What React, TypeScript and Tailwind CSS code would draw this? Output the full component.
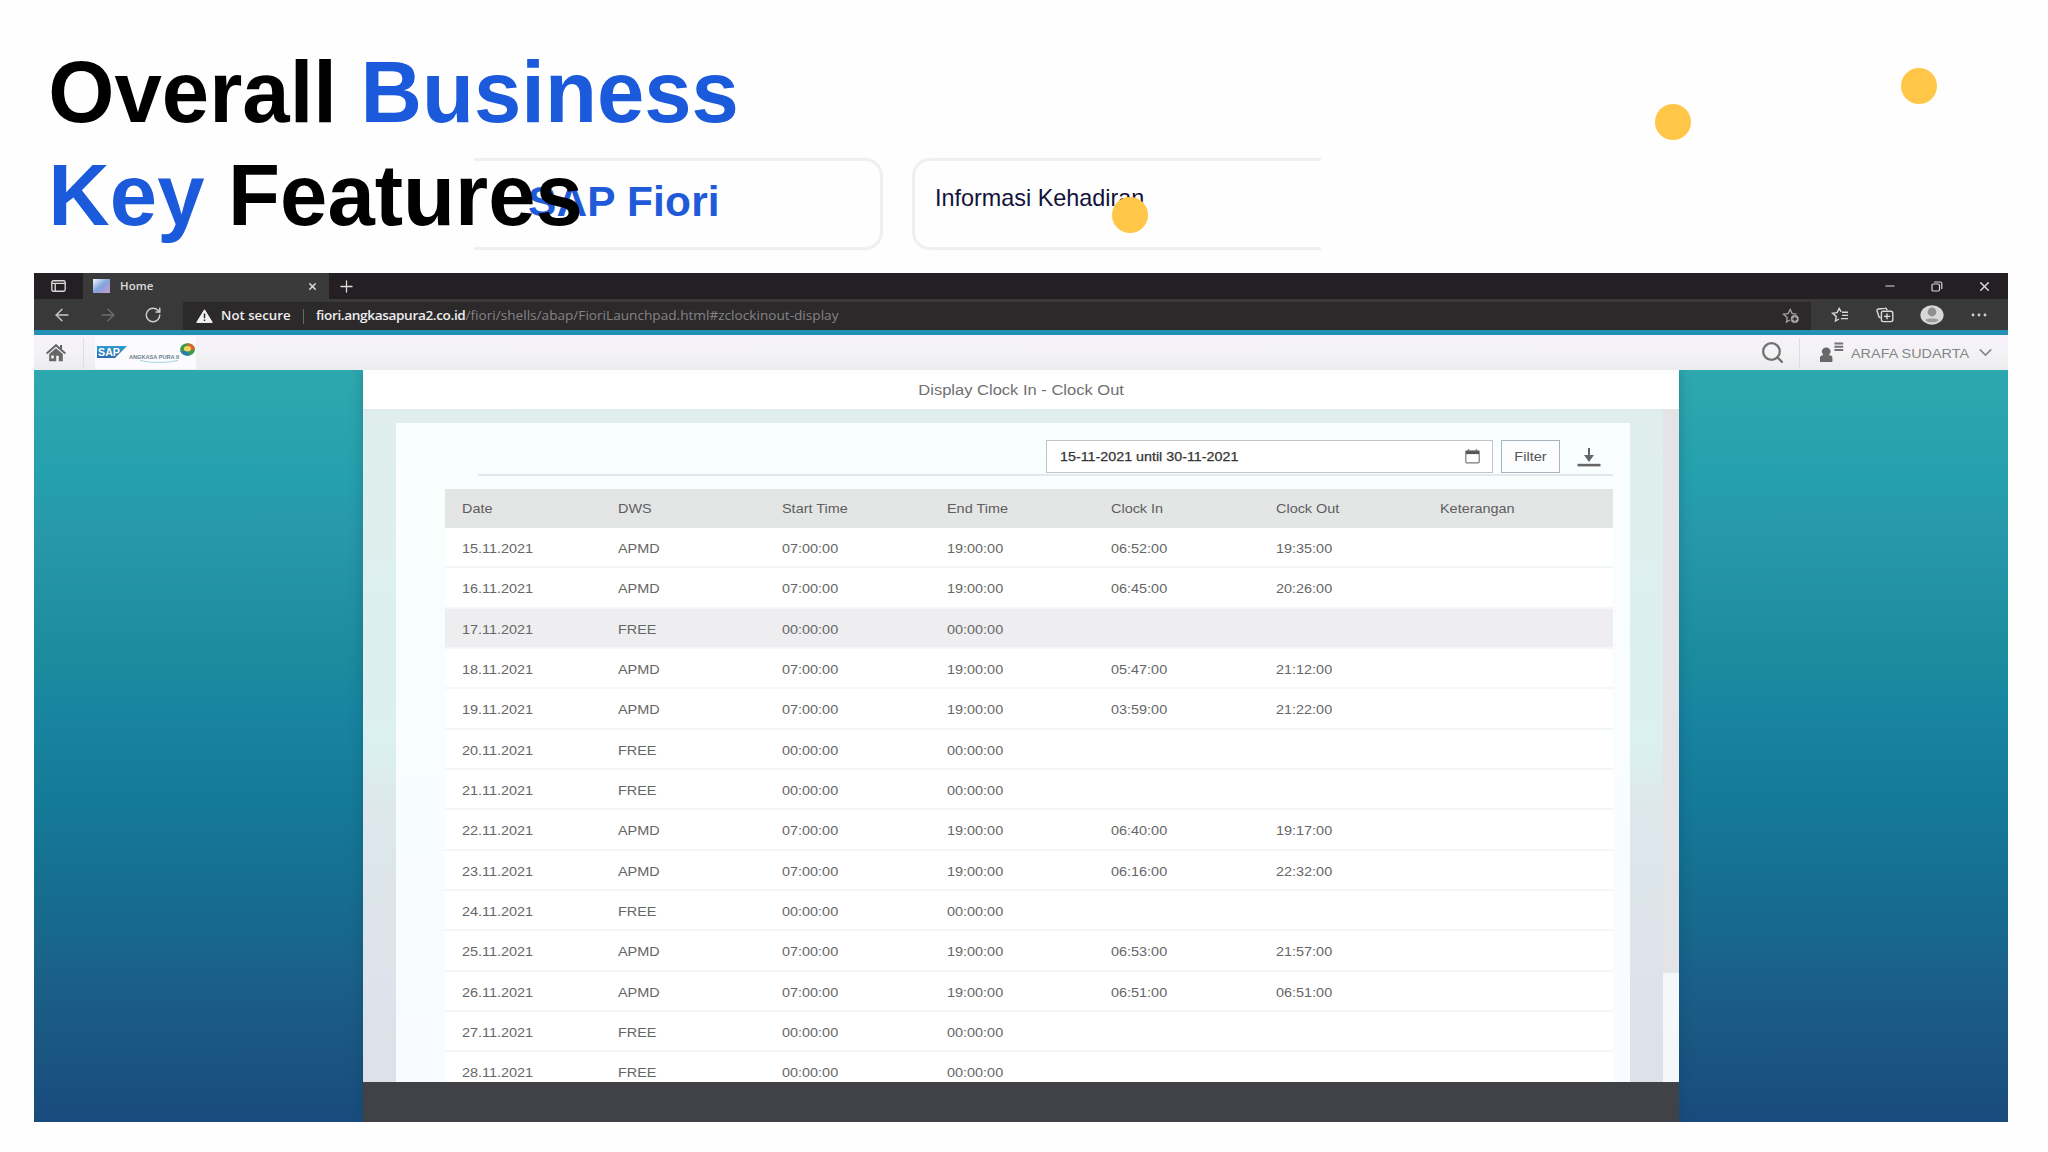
import { RotateCw, ArrowLeft, ArrowRight, X, Plus, Minus, ChevronDown, Search } from "lucide-react";

const columns = ["Date", "DWS", "Start Time", "End Time", "Clock In", "Clock Out", "Keterangan"];

const rows = [
  { date: "15.11.2021", dws: "APMD", clockIn: "06:52:00", clockOut: "19:35:00" },
  { date: "16.11.2021", dws: "APMD", clockIn: "06:45:00", clockOut: "20:26:00" },
  { date: "17.11.2021", dws: "FREE", clockIn: "", clockOut: "" },
  { date: "18.11.2021", dws: "APMD", clockIn: "05:47:00", clockOut: "21:12:00" },
  { date: "19.11.2021", dws: "APMD", clockIn: "03:59:00", clockOut: "21:22:00" },
  { date: "20.11.2021", dws: "FREE", clockIn: "", clockOut: "" },
  { date: "21.11.2021", dws: "FREE", clockIn: "", clockOut: "" },
  { date: "22.11.2021", dws: "APMD", clockIn: "06:40:00", clockOut: "19:17:00" },
  { date: "23.11.2021", dws: "APMD", clockIn: "06:16:00", clockOut: "22:32:00" },
  { date: "24.11.2021", dws: "FREE", clockIn: "", clockOut: "" },
  { date: "25.11.2021", dws: "APMD", clockIn: "06:53:00", clockOut: "21:57:00" },
  { date: "26.11.2021", dws: "APMD", clockIn: "06:51:00", clockOut: "06:51:00" },
  { date: "27.11.2021", dws: "FREE", clockIn: "", clockOut: "" },
  { date: "28.11.2021", dws: "FREE", clockIn: "", clockOut: "" },
];

const gridCols = "grid grid-cols-[156px_164px_165px_164px_165px_164px_1fr] items-center pl-[17px]";

function Cell({ children }: { children: string }) {
  return <span className="origin-left scale-x-[1.11] justify-self-start whitespace-nowrap">{children}</span>;
}

function SlideHeader() {
  return (
    <div className="grid h-[273px] shrink-0">
      <div className="col-start-1 row-start-1 flex items-start gap-[29px] pt-[158px] pl-[474px]">
        <div className="h-[92px] w-[409px] rounded-r-[18px] border-y-[3px] border-r-[3px] border-[#f0eef2] pt-[17px] pl-[54px] text-[42.4px] leading-[48px] font-bold tracking-[0.2px] text-[#1f5bd8]">
          SAP Fiori
        </div>
        <div className="h-[92px] w-[409px] rounded-l-[18px] border-y-[3px] border-l-[3px] border-[#f0eef2] pt-[23px] pl-[20px] text-[23.4px] leading-[28px] text-[#12123a]">
          Informasi Kehadiran
        </div>
      </div>
      <h1 className="z-10 col-start-1 row-start-1 origin-left scale-x-[0.967] pt-[41px] pl-[50px] text-[88px] leading-[102.6px] font-bold text-black">
        Overall <span className="text-[#1a5adb]">Business</span>
        <br />
        <span className="text-[#1a5adb]">Key</span> Features
      </h1>
    </div>
  );
}

function TabBar() {
  return (
    <div className="flex h-[26px] items-stretch bg-[#231f22] text-[#dcdcdc]">
      <div className="flex w-[49px] items-center justify-center">
        <svg width="15" height="12" viewBox="0 0 15 12" fill="none" stroke="#d8d8d8" strokeWidth="1.4">
          <rect x="0.8" y="0.8" width="13.4" height="10.4" rx="1.6" />
          <path d="M1 3.4h13M4.2 3.4v8" />
        </svg>
      </div>
      <div className="flex w-[246px] items-center bg-[#3b3a3b] pr-[11px] pl-[10px]">
        <div className="h-[14px] w-[17px] bg-gradient-to-br from-[#f4f7fb] via-[#7fa3dd] to-[#c99bd0]" />
        <span className="ml-[10px] origin-left font-['Open_Sans'] text-[11.5px] font-semibold">Home</span>
        <X className="ml-auto h-[11px] w-[11px]" strokeWidth={3.2} />
      </div>
      <div className="flex items-center pl-[8px]">
        <Plus className="h-[19px] w-[19px]" strokeWidth={1.6} />
      </div>
      <div className="ml-auto flex items-center pr-[16px]">
        <Minus className="mr-[34px] h-[14px] w-[14px]" strokeWidth={2} />
        <svg className="mr-[34px]" width="12" height="11" viewBox="0 0 12 11" fill="none" stroke="#d8d8d8" strokeWidth="1.2">
          <rect x="1" y="3" width="7.5" height="7" rx="1.2" />
          <path d="M3 1h6.2a1.6 1.6 0 0 1 1.6 1.6V8" />
        </svg>
        <X className="h-[15px] w-[15px]" strokeWidth={2.3} />
      </div>
    </div>
  );
}

function AddressBar() {
  return (
    <div className="flex h-[31px] items-center bg-[#3a393a] text-[#d0d0d0]">
      <div className="flex w-[149px] items-center pl-[18px]">
        <ArrowLeft className="h-[20px] w-[20px] text-[#c8c8c8]" strokeWidth={1.7} />
        <ArrowRight className="ml-[26px] h-[20px] w-[20px] text-[#6f6f6f]" strokeWidth={1.6} />
        <RotateCw className="ml-[26px] h-[18px] w-[18px]" strokeWidth={1.9} />
      </div>
      <div className="flex h-[28px] flex-1 items-center self-end bg-[#2b292a] pr-[11px] pl-[13px] font-['Open_Sans'] text-[12.5px]">
        <svg width="17" height="14" viewBox="0 0 17 14">
          <path d="M8.5 0.8 16.3 13.4H0.7z" fill="#f2f2f2" stroke="#f2f2f2" strokeLinejoin="round" />
          <path d="M8.5 4.6v4.6M8.5 10.6v1.5" stroke="#2b292a" strokeWidth="1.5" />
        </svg>
        <span className="ml-[8px] w-[70px] whitespace-nowrap">
          <span className="inline-block origin-left scale-x-[1.06] font-semibold text-[#eeeeee]">Not secure</span>
        </span>
        <span className="ml-[12px] h-[15px] w-px bg-[#686868]" />
        <span className="ml-[12px] origin-left scale-x-[1.09] whitespace-nowrap text-[#858384]">
          <span className="font-semibold tracking-[-0.34px] text-[#eeeeee]">fiori.angkasapura2.co.id</span>
          /fiori/shells/abap/FioriLaunchpad.html#zclockinout-display
        </span>
        <svg className="ml-auto" width="18" height="16" viewBox="0 0 18 16" fill="none" stroke="#a5a3a4" strokeWidth="1.3">
          <path d="M8 12 4.5 14l.7-4.6L1.5 6.2l4.6-.6L8.2 1.4l2 4.2 4.3.6" />
          <circle cx="12.8" cy="11" r="4" fill="#a5a3a4" stroke="none" />
          <path d="M12.8 8.8v4.4M10.6 11H15" stroke="#2b292a" />
        </svg>
      </div>
      <div className="flex w-[197px] items-center pr-[21px] pl-[20px]">
        <svg width="18" height="16" viewBox="0 0 18 16" fill="none" stroke="#dadada" strokeWidth="1.4">
          <path d="M8 12 4.5 14l.7-4.6L1.5 6.2l4.6-.6L8.2 1.4l1.9 3.4M11 5.2h6M11 8.4h6M10 11.6h7" />
        </svg>
        <svg className="ml-[27px]" width="18" height="16" viewBox="0 0 18 16" fill="none" stroke="#dadada" strokeWidth="1.4">
          <path d="M4.6 10.8 3 10 1 3.8A1.6 1.6 0 0 1 2.3 2L9 1.2a1.6 1.6 0 0 1 1.8 1.2L11 3.4" />
          <rect x="5.4" y="4.2" width="11.4" height="10.4" rx="1.8" />
          <path d="M11 6.6v5.6M8 9.4h6.2" />
        </svg>
        <svg className="ml-[26px]" width="24" height="20" viewBox="0 0 24 20">
          <ellipse cx="12" cy="10" rx="11.6" ry="9.7" fill="#d8d8d8" />
          <circle cx="12" cy="7" r="4.4" fill="#8f8f8f" />
          <path d="M5.4 15.4c0-2.6 13.2-2.6 13.2 0-3.4 2.6-9.8 2.6-13.2 0z" fill="#9c9c9c" />
        </svg>
        <svg className="ml-auto" width="16" height="4" viewBox="0 0 16 4" fill="#d0d0d0">
          <circle cx="2" cy="2" r="1.4" />
          <circle cx="8" cy="2" r="1.4" />
          <circle cx="14" cy="2" r="1.4" />
        </svg>
      </div>
    </div>
  );
}

function FioriHeader() {
  return (
    <div className="flex h-[40px] items-center border-t-[5px] border-[#2391b5] bg-gradient-to-b from-[#f8f0f9] via-[#f3f3f6] to-[#ececee]">
      <div className="flex h-[30px] w-[50px] items-center border-r border-[#dedde0] pl-[12px]">
        <svg width="20" height="18" viewBox="0 0 20 18" fill="#666">
          <path d="M0.7 9.6 10 1.2l9.3 8.4M15 1v4.6" fill="none" stroke="#666" strokeWidth="2" />
          <path d="M3.2 10 10 4.2 16.8 10v7.2h-4v-5.4h-2.6v5.4h-7zM5.2 11.4v3h2.6v-3z" fillRule="evenodd" />
        </svg>
      </div>
      <div className="ml-[11px] flex h-[33px] w-[101px] items-center bg-[#fbfafc]">
        <svg width="101" height="26" viewBox="0 0 101 26">
          <defs>
            <linearGradient id="sap" x1="0" x2="0" y1="0" y2="1">
              <stop offset="0" stopColor="#2f9ad2" />
              <stop offset="1" stopColor="#2b6cab" />
            </linearGradient>
          </defs>
          <path d="M2 6h30L20 18H2z" fill="url(#sap)" />
          <text x="3" y="16" fontSize="11.5" fontWeight="bold" textLength="22" lengthAdjust="spacingAndGlyphs" fill="#fff" fontFamily="Liberation Sans">SAP</text>
          <text x="34" y="18.6" fontSize="5.6" fontWeight="bold" textLength="50" lengthAdjust="spacingAndGlyphs" fill="#6c7f8c" fontFamily="Liberation Sans">ANGKASA PURA II</text>
          <path d="M45 20.5q18 4 38 0" fill="none" stroke="#a9d3df" strokeWidth="1" />
          <ellipse cx="92.5" cy="9.5" rx="7.4" ry="6.2" fill="#3f9a4c" />
          <path d="M92.5 3.3a7.4 6.2 0 0 1 7.4 6.2l-7.4 1z" fill="#d9632c" />
          <path d="M85.3 11a7.4 6.2 0 0 0 10.2 4l-4-4z" fill="#287fae" />
          <ellipse cx="92.5" cy="8.8" rx="3.6" ry="2.7" fill="#f2d45c" />
        </svg>
      </div>
      <div className="ml-auto flex items-center pr-[12px]">
        <Search className="h-[25px] w-[25px] text-[#717171]" strokeWidth={2.2} />
        <span className="ml-[14px] h-[30px] w-px bg-[#dedde0]" />
        <svg className="ml-[19px]" width="25" height="21" viewBox="0 0 25 21" fill="#686868">
          <ellipse cx="7.2" cy="9.6" rx="4.4" ry="4.2" />
          <path d="M1 20v-4.4q0-2 3-2.4l3-1.4 3.4 1.4q3 .4 3 2.4V20z" />
          <path d="M15.4 1.6h8.8M15.4 4.8h8.8M15.4 8h8.8" stroke="#747474" strokeWidth="2" />
        </svg>
        <span className="ml-[7px] w-[118px] whitespace-nowrap">
          <span className="inline-block origin-left scale-x-[1.11] text-[13px] text-[#858585]">ARAFA SUDARTA</span>
        </span>
        <ChevronDown className="ml-[6px] h-[21px] w-[21px] text-[#858585]" strokeWidth={1.8} />
      </div>
    </div>
  );
}

function FilterBar() {
  return (
    <div className="ml-[33px] flex h-[36px] items-start justify-end border-b-2 border-[#e2e9ec]">
      <div className="flex h-[33px] w-[447px] items-center justify-between border border-[#bfc4c6] bg-white pr-[12px] pl-[13px]">
        <span className="origin-left scale-x-[1.1] text-[13px] text-[#333] [-webkit-text-stroke:0.25px_#333]">15-11-2021 until 30-11-2021</span>
        <svg width="15" height="15" viewBox="0 0 15 15" fill="none" stroke="#7a7a7a" strokeWidth="1.2">
          <rect x="0.8" y="1.8" width="13.4" height="12" rx="0.8" />
          <path d="M1 3.6h13" stroke="#555" strokeWidth="3" />
          <path d="M3.6 0v2M11.4 0v2" />
        </svg>
      </div>
      <button className="ml-[8px] flex h-[33px] w-[59px] items-center justify-center border border-[#a9b3bb] bg-[#fbfdfe]">
        <span className="scale-x-[1.12] text-[13px] text-[#555]">Filter</span>
      </button>
      <svg className="mt-[8px] mr-[12px] ml-[17px]" width="24" height="20" viewBox="0 0 24 20" fill="#666">
        <path d="M11 0h2v7h4l-5 7-5-7h4z" />
        <path d="M0.5 15.8h23v2.6h-23z" />
      </svg>
    </div>
  );
}

function ClockTable() {
  return (
    <div className="mt-[13px] bg-white text-[13px] text-[#666]">
      <div className={`${gridCols} h-[39px] bg-[#e4e5e5] text-[#5e5e5e]`}>
        {columns.map((name) => (
          <Cell key={name}>{name}</Cell>
        ))}
      </div>
      {rows.map((row, index) => (
        <div
          key={row.date}
          className={`${gridCols} h-[40.33px] border-b-2 border-[#f5f6f8] pt-[3px] ${index === 2 ? "bg-[#eeeef0]" : ""}`}
        >
          <Cell>{row.date}</Cell>
          <Cell>{row.dws}</Cell>
          <Cell>{row.dws === "APMD" ? "07:00:00" : "00:00:00"}</Cell>
          <Cell>{row.dws === "APMD" ? "19:00:00" : "00:00:00"}</Cell>
          <Cell>{row.clockIn}</Cell>
          <Cell>{row.clockOut}</Cell>
        </div>
      ))}
    </div>
  );
}

function Launchpad() {
  return (
    <div className="flex min-h-0 flex-1 justify-center overflow-hidden bg-[linear-gradient(to_bottom,#2ea8af_0%,#25a0ad_14%,#2798a9_22%,#1c8c9d_38%,#1885a1_45%,#157998_58%,#166c8f_71%,#1a618a_80%,#1a5682_90%,#194b7d_100%)]">
      <div className="mr-px flex w-[1316px] flex-col bg-[#414247] shadow-[0_0_12px_rgba(0,60,80,0.3)]">
        <div className="flex h-[39px] shrink-0 items-center justify-center bg-white pt-[2px] text-[14px] text-[#707070]">
          <span className="ml-px scale-x-[1.18]">Display Clock In - Clock Out</span>
        </div>
        <div className="flex h-[673px] shrink-0 bg-[linear-gradient(to_bottom,#dfeeec_0%,#dbf0f0_50%,#dde7ec_60%,#dde1e9_100%)]">
          <div className="mt-[14px] ml-[33px] w-[1234px] overflow-hidden bg-gradient-to-b from-[#f8fffe] to-[#f8fbff] pt-[17px] pr-[17px] pl-[49px]">
            <FilterBar />
            <ClockTable />
          </div>
          <div className="ml-auto flex w-[16px] flex-col justify-end bg-[#e4e4e6]">
            <div className="h-[109px] bg-[#f6f7fb]" />
          </div>
        </div>
      </div>
    </div>
  );
}

export default function App() {
  return (
    <div className="relative flex h-[1152px] w-[2048px] flex-col overflow-hidden bg-[#fefefe] font-['Liberation_Sans',sans-serif]">
      <SlideHeader />
      <div className="mr-[40px] ml-[34px] flex h-[849px] flex-col overflow-hidden">
        <TabBar />
        <AddressBar />
        <FioriHeader />
        <Launchpad />
      </div>
      {/* decorative dots lying over the slide */}
      <div className="absolute top-[197px] left-[1112px] z-20 h-[36px] w-[36px] rounded-full bg-[#ffc648]" />
      <div className="absolute top-[104px] left-[1655px] z-20 h-[36px] w-[36px] rounded-full bg-[#ffc648]" />
      <div className="absolute top-[68px] left-[1901px] z-20 h-[36px] w-[36px] rounded-full bg-[#ffc648]" />
    </div>
  );
}
